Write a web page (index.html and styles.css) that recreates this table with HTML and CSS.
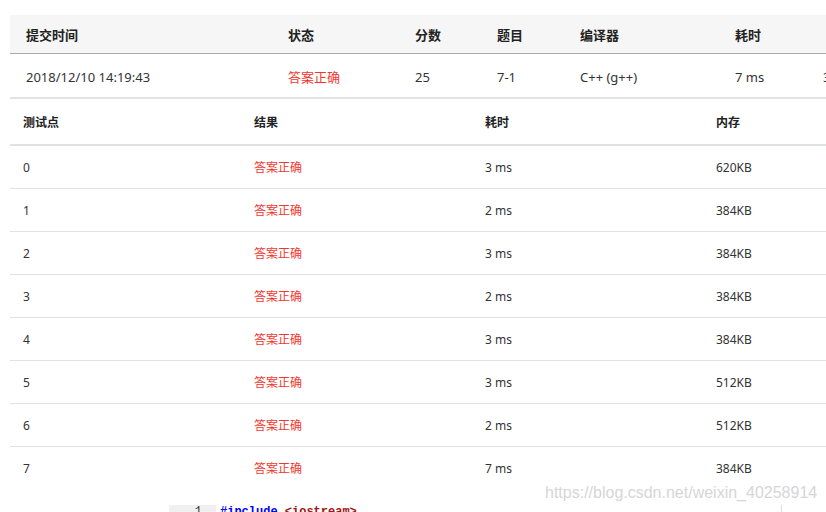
FILE: index.html
```html
<!DOCTYPE html>
<html lang="zh">
<head>
<meta charset="utf-8">
<title>提交详情</title>
<link rel="stylesheet" href="styles.css">
</head>
<body>
<div class="page">
  <table class="summary">
    <colgroup>
      <col class="c1"><col class="c2"><col class="c3"><col class="c4"><col class="c5"><col class="c6"><col class="c7">
    </colgroup>
    <thead>
      <tr><th>提交时间</th><th>状态</th><th>分数</th><th>题目</th><th>编译器</th><th>耗时</th><th></th></tr>
    </thead>
    <tbody>
      <tr><td>2018/12/10 14:19:43</td><td class="ok">答案正确</td><td>25</td><td>7-1</td><td>C++ (g++)</td><td>7 ms</td><td class="edge">3</td></tr>
    </tbody>
  </table>
  <table class="cases">
    <colgroup><col class="d"><col class="d"><col class="d"><col class="d"></colgroup>
    <thead>
      <tr><th>测试点</th><th>结果</th><th>耗时</th><th>内存</th></tr>
    </thead>
    <tbody>
      <tr><td>0</td><td class="ok">答案正确</td><td>3 ms</td><td>620KB</td></tr>
      <tr><td>1</td><td class="ok">答案正确</td><td>2 ms</td><td>384KB</td></tr>
      <tr><td>2</td><td class="ok">答案正确</td><td>3 ms</td><td>384KB</td></tr>
      <tr><td>3</td><td class="ok">答案正确</td><td>2 ms</td><td>384KB</td></tr>
      <tr><td>4</td><td class="ok">答案正确</td><td>3 ms</td><td>384KB</td></tr>
      <tr><td>5</td><td class="ok">答案正确</td><td>3 ms</td><td>512KB</td></tr>
      <tr><td>6</td><td class="ok">答案正确</td><td>2 ms</td><td>512KB</td></tr>
      <tr class="last"><td>7</td><td class="ok">答案正确</td><td>7 ms</td><td>384KB</td></tr>
    </tbody>
  </table>
  <div class="code">
    <span class="ln">1</span><span class="src"><span class="kw">#include</span> <span class="inc">&lt;iostream&gt;</span></span>
  </div>
  <div class="watermark">https://blog.csdn.net/weixin_40258914</div>
</div>
</body>
</html>
```
FILE: styles.css
```css
html, body {
  margin: 0;
  padding: 0;
  background: #fff;
  overflow: hidden;
}
body {
  width: 826px;
  height: 512px;
  font-family: "Noto Sans", "Noto Sans CJK SC", sans-serif;
  color: #333;
}
.page {
  position: relative;
  padding: 15px 0 0 10px;
  width: 816px;
}
table {
  border-collapse: collapse;
  table-layout: fixed;
}
.summary {
  width: 816px;
  font-size: 13px;
}
.summary .c1 { width: 262px; }
.summary .c2 { width: 127px; }
.summary .c3 { width: 82px; }
.summary .c4 { width: 83px; }
.summary .c5 { width: 155px; }
.summary .c6 { width: 88px; }
.summary .c7 { width: 19px; }
.summary th {
  background: #f6f6f6;
  height: 38px;
  padding: 0 0 0 16px;
  text-align: left;
  font-weight: bold;
  color: #222;
  border-bottom: 1px solid #aaa;
  white-space: nowrap;
}
.summary td {
  height: 41px;
  padding: 2px 0 0 16px;
  white-space: nowrap;
  border-bottom: 2px solid #e2e2e6;
}
.summary td.edge {
  overflow: hidden;
  text-overflow: clip;
}
.cases {
  width: 816px;
  font-size: 12px;
}
.cases .d { width: 231px; }
.cases th {
  height: 45px;
  padding: 0 0 0 13px;
  text-align: left;
  font-weight: bold;
  color: #222;
  border-bottom: 2px solid #dee2e6;
}
.cases td {
  height: 42px;
  padding: 0 0 0 13px;
  border-bottom: 1px solid #e2e2e2;
}
.cases tr.last td {
  border-bottom: none;
}
.ok {
  color: #f2362e;
}
.code {
  display: flex;
  margin: 16px 0 0 159px;
  width: 612px;
  height: 20px;
  font-family: "Liberation Mono", monospace;
  font-size: 12px;
  border-right: 1px solid #ddd;
}
.ln {
  width: 47px;
  padding-right: 14px;
  box-sizing: border-box;
  background: #f0f0f0;
  text-align: right;
  color: #333;
  line-height: 14px;
}
.src {
  padding-left: 4px;
  line-height: 14px;
  font-weight: bold;
}
.kw { color: #0000ff; }
.inc { color: #a31515; }
.watermark {
  position: absolute;
  left: 545px;
  top: 484px;
  font-family: "Liberation Sans", Arial, sans-serif;
  font-size: 16px;
  color: #d6d6d6;
  white-space: nowrap;
}
```
